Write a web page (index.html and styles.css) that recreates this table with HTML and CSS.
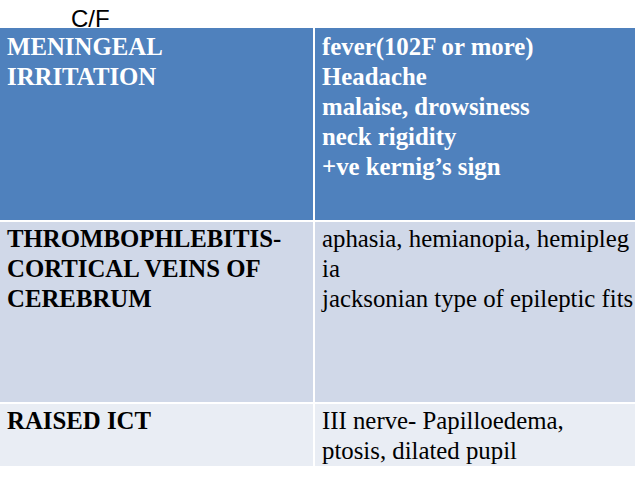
FILE: index.html
```html
<!DOCTYPE html>
<html>
<head>
<meta charset="utf-8">
<link rel="stylesheet" href="styles.css">
</head>
<body>
<div class="slide">
  <div class="title"><span>C/F</span></div>
  <div class="table">
    <div class="cell head bold">MENINGEAL<br>IRRITATION</div>
    <div class="cell head bold">fever(102F or more)<br>Headache<br>malaise, drowsiness<br>neck rigidity<br>+ve kernig’s sign</div>
    <div class="cell odd bold">THROMBOPHLEBITIS-<br>CORTICAL VEINS OF<br>CEREBRUM</div>
    <div class="cell odd">aphasia, hemianopia, hemipleg<br>ia<br>jacksonian type of epileptic fits</div>
    <div class="cell even bold">RAISED ICT</div>
    <div class="cell even">III nerve- Papilloedema,<br>ptosis, dilated pupil</div>
  </div>
</div>
</body>
</html>
```

FILE: styles.css
```css
html, body {
  margin: 0;
  padding: 0;
  background: #ffffff;
}

.slide {
  width: 638px;
  height: 478px;
  background: #ffffff;
  overflow: hidden;
}

.title {
  height: 28px;
  box-sizing: border-box;
  padding: 10px 0 0 71px;
  font-family: "Liberation Sans", Arial, sans-serif;
  font-size: 24px;
  line-height: 18px;
  color: #000000;
}

.table {
  display: grid;
  grid-template-columns: 313px 320px;
  grid-template-rows: 192px 180px 62px;
  column-gap: 2px;
  row-gap: 2px;
  width: 635px;
  background: #ffffff;
}

.cell {
  box-sizing: border-box;
  padding: 4px 0 0 7px;
  font-family: "Liberation Serif", "Times New Roman", serif;
  font-size: 24.8px;
  line-height: 30px;
  color: #000000;
  white-space: nowrap;
  overflow: hidden;
}

.bold {
  font-weight: bold;
}

.head {
  background: #4f81bd;
  color: #ffffff;
}

.odd {
  background: #d0d8e8;
  padding-top: 2px;
}

.even {
  background: #e9edf4;
  padding-top: 2px;
}
```
